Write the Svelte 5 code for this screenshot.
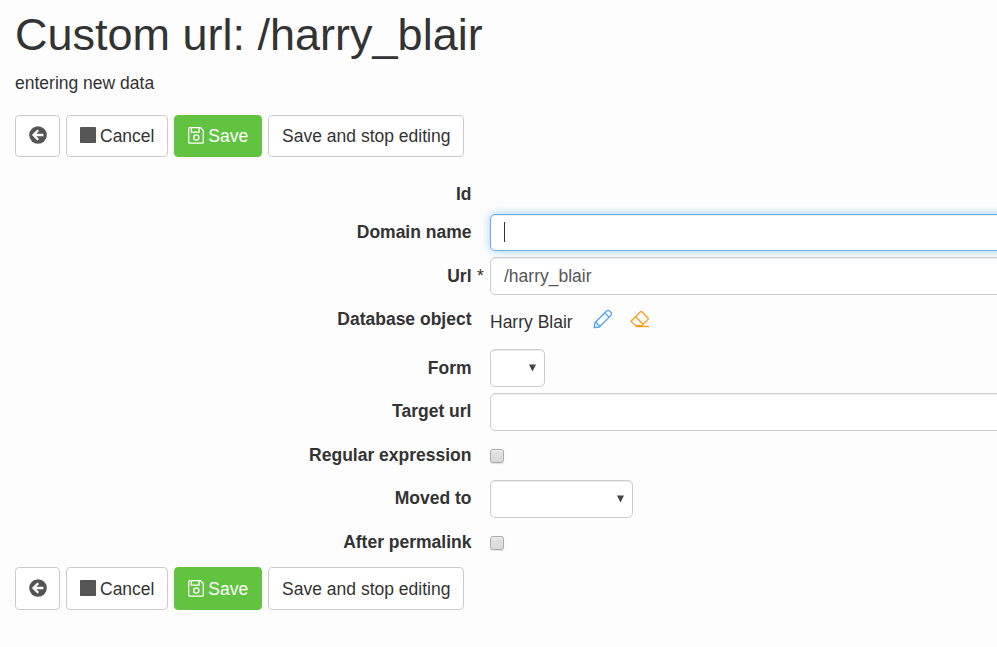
<script lang="ts">
  type Row = {
    label: string;
    kind: 'empty' | 'text' | 'object' | 'select' | 'check';
    size?: string;
    value?: string;
    required?: boolean;
    focused?: boolean;
  };

  const rows: Row[] = [
    { label: 'Id', kind: 'empty' },
    { label: 'Domain name', kind: 'text', focused: true },
    { label: 'Url', kind: 'text', value: '/harry_blair', required: true },
    { label: 'Database object', kind: 'object', value: 'Harry Blair' },
    { label: 'Form', kind: 'select', size: 'small' },
    { label: 'Target url', kind: 'text' },
    { label: 'Regular expression', kind: 'check' },
    { label: 'Moved to', kind: 'select', size: 'medium' },
    { label: 'After permalink', kind: 'check' },
  ];
</script>

{#snippet toolbar(position: string)}
  <div class="toolbar {position}">
    <button class="btn back" type="button" aria-label="Back">
      <svg width="18" height="18" viewBox="0 0 18 18">
        <circle cx="9" cy="9" r="8.8" fill="#555" />
        <path d="M9.2 4.3 4.5 9l4.7 4.7M4.8 9h9.6" fill="none" stroke="#fff" stroke-width="2.3" />
      </svg>
    </button>
    <button class="btn cancel" type="button">
      <svg width="16" height="16" viewBox="0 0 16 16"><rect width="16" height="16" rx="0.8" fill="#555" /></svg>
      <span>Cancel</span>
    </button>
    <button class="btn save" type="button">
      <svg width="16" height="17" viewBox="0 0 16 17" fill="none" stroke="#fff" stroke-width="1.3">
        <path d="M2 .7h10.6l2.7 2.8v11.4a1.3 1.3 0 0 1-1.3 1.3H2A1.3 1.3 0 0 1 .7 14.9V2A1.3 1.3 0 0 1 2 .7Z" />
        <path d="M3.4.7v4.5h7.7V.7" />
        <circle cx="8.3" cy="10.5" r="2.6" />
      </svg>
      <span>Save</span>
    </button>
    <button class="btn stop" type="button"><span>Save and stop editing</span></button>
  </div>
{/snippet}

<main>
  <h1>Custom url: /harry_blair</h1>
  <p class="state">entering new data</p>

  {@render toolbar('top')}

  <div class="form">
    {#each rows as row}
      <div class="row {row.kind}">
        <div class="label">{row.label}</div>
        <div class="mark">{row.required ? '*' : ''}</div>
        {#if row.kind === 'text'}
          <div class="field" class:focused={row.focused}>
            {#if row.focused}<i class="caret"></i>{/if}
            <span>{row.value ?? ''}</span>
          </div>
        {:else if row.kind === 'object'}
          <div class="object-value">
            <span>{row.value}</span>
            <svg class="edit" width="20" height="20" viewBox="0 0 20 20" fill="none" stroke="#4da3f7" stroke-width="1.3" stroke-linejoin="round">
              <path d="M1.2 18.7 2 13.7 13.4 2.3Q15.1.6 16.8 2.2L17.8 3.2Q19.4 4.9 17.7 6.6L6.2 18Z" />
              <path d="M2 13.7Q4.5 13 4.3 15.6Q6.8 15.3 6.2 18M11.8 3.9l4.3 4.3" />
            </svg>
            <svg class="erase" width="20" height="18" viewBox="0 0 20 18" fill="none" stroke="#ff9b1a" stroke-width="1.3" stroke-linejoin="round">
              <path d="M1.5 10.7 10.4 1.7Q11.1 1 11.8 1.7L18 8Q18.700 8.7 18 9.4L12 15.6H6.2L1.5 11.9Q.9 11.3 1.5 10.7Z" />
              <path d="M5.6 6.7 13.2 14.3" />
              <path d="M5.5 16.5H19" />
            </svg>
          </div>
        {:else if row.kind === 'select'}
          <div class="field select {row.size}">
            <svg width="7" height="8" viewBox="0 0 7 8"><path d="M0 .5h7L3.5 7.5Z" fill="#444" /></svg>
          </div>
        {:else if row.kind === 'check'}
          <span class="checkbox" role="checkbox" aria-checked="false" aria-label={row.label} tabindex="0"></span>
        {/if}
      </div>
    {/each}
  </div>

  {@render toolbar('bottom')}
</main>

<style>
  :global(body) {
    background: #fdfdfd;
    overflow: hidden;
  }

  main {
    box-sizing: border-box;
    height: 647px;
    padding: 10px 0 0 15px;
    overflow: hidden;
    font-family: 'Liberation Sans', Arial, sans-serif;
    font-size: 17.5px;
    line-height: 25px;
    color: #333;
  }

  h1 {
    margin: 0;
    font-size: 45px;
    font-weight: 400;
    line-height: 50px;
    white-space: nowrap;
  }

  .state {
    margin: 11px 0 19px;
  }

  .toolbar {
    display: flex;
    gap: 6px;
    height: 42px;
  }

  .toolbar.bottom {
    height: 43px;
  }

  .btn {
    box-sizing: border-box;
    display: flex;
    align-items: center;
    justify-content: center;
    gap: 4px;
    height: 100%;
    padding: 0;
    font: inherit;
    color: #333;
    background: #fff;
    border: 1px solid #ccc;
    border-radius: 4px;
    white-space: nowrap;
  }

  .bottom .btn {
    padding-top: 1px;
  }

  .btn svg {
    flex: none;
  }

  .btn span {
    margin-right: -0.5px;
  }

  .back { width: 45px; }
  .back svg { margin-bottom: 2px; }
  .cancel { width: 102px; }
  .cancel svg { margin-bottom: 2px; }
  .save { width: 88px; color: #fff; background: #62c341; border-color: #62c341; }
  .save svg { margin-bottom: 1px; }
  .stop { width: 196px; }

  .form {
    padding-top: 18px;
  }

  .row {
    display: grid;
    grid-template-columns: 456.5px 18.5px 1fr;
    height: 43.6px;
  }

  .row.empty {
    height: 38.75px;
  }

  .row.object {
    height: 48.25px;
  }

  .label {
    padding-top: 6.35px;
    font-weight: 700;
    text-align: right;
    white-space: nowrap;
  }

  .empty .label {
    padding-top: 7px;
  }

  .mark {
    padding: 6.35px 0 0 5.5px;
  }

  .field {
    box-sizing: border-box;
    display: flex;
    align-items: center;
    height: 38px;
    margin-right: -15px;
    padding: 0 13px;
    color: #555;
    background: #fff;
    border: 1px solid #ccc;
    border-radius: 5px;
    box-shadow: inset 0 1px 1px rgba(0, 0, 0, 0.075);
  }

  .field.focused {
    height: 37px;
    border-color: #66afe9;
    box-shadow: inset 0 1px 1px rgba(0, 0, 0, 0.075), 0 0 10px rgba(102, 175, 233, 0.6);
  }

  .caret {
    width: 1px;
    height: 20px;
    margin-bottom: 1px;
    background: #333;
  }

  .select {
    justify-content: flex-end;
    margin-right: 0;
    padding-right: 8px;
  }

  .small { width: 55px; }
  .medium { width: 143px; }

  .object-value {
    display: flex;
    align-items: flex-start;
    padding-top: 9px;
  }

  .edit {
    margin: -1px 0 0 20.5px;
  }

  .erase {
    margin: 0 0 0 17px;
  }

  .checkbox {
    box-sizing: border-box;
    width: 14px;
    height: 14px;
    margin-top: 12.7px;
    background: linear-gradient(#e4e4e4, #d9d9d9);
    border: 1px solid #aaa;
    border-radius: 3px;
    box-shadow: 0 1px 1px rgba(0, 0, 0, 0.12), inset 0 1px 1px rgba(255, 255, 255, 0.5);
  }
</style>
